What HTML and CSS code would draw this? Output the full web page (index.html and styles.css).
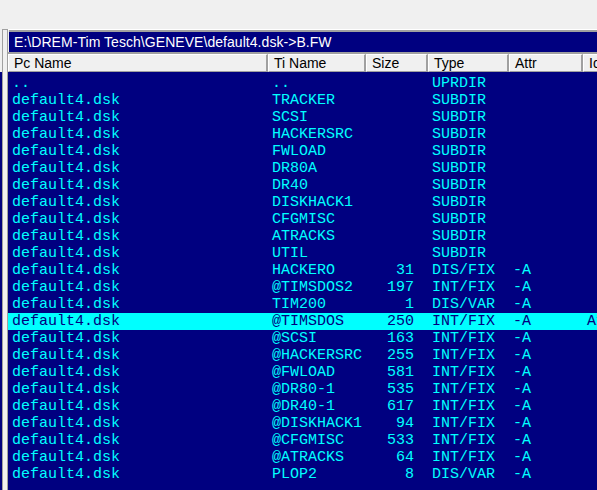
FILE: index.html
```html
<!DOCTYPE html>
<html lang="en">
<head>
<meta charset="UTF-8">
<title>B.FW</title>
<link rel="stylesheet" href="styles.css">
</head>
<body>
<div class="window">
  <div class="side">
    <div class="side-top"></div>
    <div class="side-list"></div>
  </div>
  <div class="splitter"></div>

  <div class="panel">
    <div class="title">E:\DREM-Tim Tesch\GENEVE\default4.dsk-&gt;B.FW</div>

    <div class="head cols">
      <div class="hcell">Pc Name</div>
      <div class="hcell">Ti Name</div>
      <div class="hcell">Size</div>
      <div class="hcell">Type</div>
      <div class="hcell">Attr</div>
      <div class="hcell">Id</div>
    </div>

    <div class="list">
      <div class="row cols"><span>..</span><span>..</span><span class="size"></span><span>UPRDIR</span><span></span><span></span></div>
      <div class="row cols"><span>default4.dsk</span><span>TRACKER</span><span class="size"></span><span>SUBDIR</span><span></span><span></span></div>
      <div class="row cols"><span>default4.dsk</span><span>SCSI</span><span class="size"></span><span>SUBDIR</span><span></span><span></span></div>
      <div class="row cols"><span>default4.dsk</span><span>HACKERSRC</span><span class="size"></span><span>SUBDIR</span><span></span><span></span></div>
      <div class="row cols"><span>default4.dsk</span><span>FWLOAD</span><span class="size"></span><span>SUBDIR</span><span></span><span></span></div>
      <div class="row cols"><span>default4.dsk</span><span>DR80A</span><span class="size"></span><span>SUBDIR</span><span></span><span></span></div>
      <div class="row cols"><span>default4.dsk</span><span>DR40</span><span class="size"></span><span>SUBDIR</span><span></span><span></span></div>
      <div class="row cols"><span>default4.dsk</span><span>DISKHACK1</span><span class="size"></span><span>SUBDIR</span><span></span><span></span></div>
      <div class="row cols"><span>default4.dsk</span><span>CFGMISC</span><span class="size"></span><span>SUBDIR</span><span></span><span></span></div>
      <div class="row cols"><span>default4.dsk</span><span>ATRACKS</span><span class="size"></span><span>SUBDIR</span><span></span><span></span></div>
      <div class="row cols"><span>default4.dsk</span><span>UTIL</span><span class="size"></span><span>SUBDIR</span><span></span><span></span></div>
      <div class="row cols"><span>default4.dsk</span><span>HACKERO</span><span class="size">31</span><span>DIS/FIX</span><span>-A</span><span></span></div>
      <div class="row cols"><span>default4.dsk</span><span>@TIMSDOS2</span><span class="size">197</span><span>INT/FIX</span><span>-A</span><span></span></div>
      <div class="row cols"><span>default4.dsk</span><span>TIM200</span><span class="size">1</span><span>DIS/VAR</span><span>-A</span><span></span></div>
      <div class="row cols selected"><span>default4.dsk</span><span>@TIMSDOS</span><span class="size">250</span><span>INT/FIX</span><span>-A</span><span>A1</span></div>
      <div class="row cols"><span>default4.dsk</span><span>@SCSI</span><span class="size">163</span><span>INT/FIX</span><span>-A</span><span></span></div>
      <div class="row cols"><span>default4.dsk</span><span>@HACKERSRC</span><span class="size">255</span><span>INT/FIX</span><span>-A</span><span></span></div>
      <div class="row cols"><span>default4.dsk</span><span>@FWLOAD</span><span class="size">581</span><span>INT/FIX</span><span>-A</span><span></span></div>
      <div class="row cols"><span>default4.dsk</span><span>@DR80-1</span><span class="size">535</span><span>INT/FIX</span><span>-A</span><span></span></div>
      <div class="row cols"><span>default4.dsk</span><span>@DR40-1</span><span class="size">617</span><span>INT/FIX</span><span>-A</span><span></span></div>
      <div class="row cols"><span>default4.dsk</span><span>@DISKHACK1</span><span class="size">94</span><span>INT/FIX</span><span>-A</span><span></span></div>
      <div class="row cols"><span>default4.dsk</span><span>@CFGMISC</span><span class="size">533</span><span>INT/FIX</span><span>-A</span><span></span></div>
      <div class="row cols"><span>default4.dsk</span><span>@ATRACKS</span><span class="size">64</span><span>INT/FIX</span><span>-A</span><span></span></div>
      <div class="row cols"><span>default4.dsk</span><span>PLOP2</span><span class="size">8</span><span>DIS/VAR</span><span>-A</span><span></span></div>
    </div>
  </div>
</div>
</body>
</html>
```

FILE: styles.css
```css
html, body {
  margin: 0;
  height: 100%;
}
body {
  background: #f0f0f0;
  overflow: hidden;
  font-family: "Liberation Sans", Arial, sans-serif;
}
.window {
  display: flex;
  height: 490px;
  padding-top: 29px;
  box-sizing: border-box;
}

/* sliver of the neighbouring panel + splitter */
.side {
  width: 2px;
  display: flex;
  flex-direction: column;
}
.side-top { height: 43px; }
.side-list { flex: 1; background: #000080; }
.splitter {
  width: 4px;
  border-left: 1px solid #a0a0a0;
  border-right: 1px solid #a0a0a0;
  border-top: 1px solid #a0a0a0;
}

.panel {
  flex: 1;
  min-width: 0;
  display: flex;
  flex-direction: column;
  border-top: 1px solid #fff;
  overflow: hidden;
}
.title {
  border-top: 2px solid #a0a0a0;
  margin-left: 1px;
  height: 20px;
  line-height: 20px;
  padding-left: 5px;
  background: #000080;
  color: #fff;
  font-size: 14px;
  letter-spacing: 0.05px;
  white-space: nowrap;
}

.cols {
  display: grid;
  grid-template-columns: 260px 98px 62px 81px 74px 120px;
}
.head {
  border-top: 2px solid #a0a0a0;
  background: #a0a0a0;
}
.hcell {
  height: 16px;
  line-height: 16px;
  padding-left: 5px;
  background: #f0f0f0;
  border-top: 1px solid #fff;
  border-left: 1px solid #fff;
  border-right: 2px solid #a0a0a0;
  border-bottom: 1px solid #a0a0a0;
  font-size: 14px;
  color: #000;
  white-space: nowrap;
  overflow: hidden;
}

.list {
  flex: 1;
  padding-top: 3px;
  background: #000080;
}
.row {
  height: 17px;
  line-height: 18px;
  font-family: "Liberation Mono", "Courier New", monospace;
  font-size: 15px;
  color: #00ffff;
  white-space: pre;
}
.row span {
  padding-left: 4px;
  overflow: hidden;
}
.row .size {
  text-align: right;
  padding-right: 14px;
}
.row.selected {
  background: #00ffff;
  color: #000080;
}
```
